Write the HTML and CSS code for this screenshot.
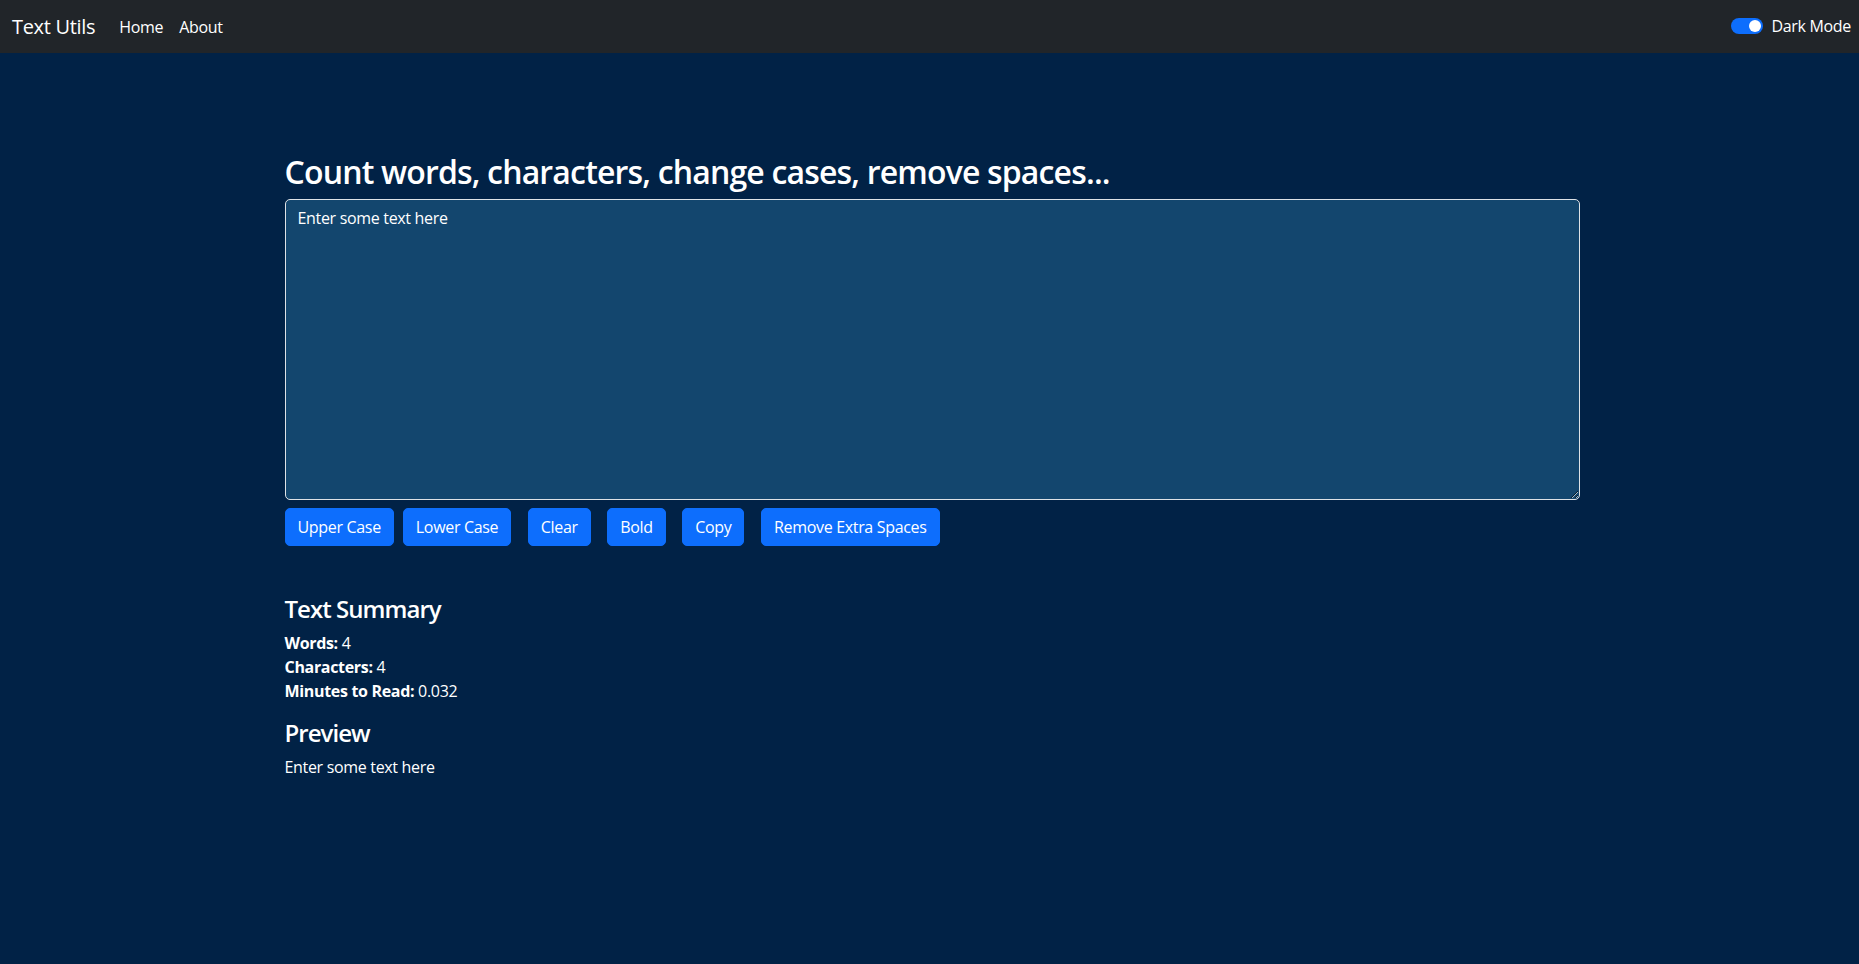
FILE: index.html
```html
<!DOCTYPE html>
<html lang="en">
<head>
    <meta charset="UTF-8">
    <meta name="viewport" content="width=device-width, initial-scale=1">
    <title>Text Utils</title>
    <link rel="stylesheet" href="styles.css">
</head>
<body>
    <nav class="navbar">
        <div class="navbar-left">
            <a class="brand" href="#">Text Utils</a>
            <ul class="nav-links">
                <li><a href="#">Home</a></li>
                <li><a href="#">About</a></li>
            </ul>
        </div>
        <label class="mode-switch">
            <span class="switch"><span class="knob"></span></span>
            <span class="mode-label">Dark Mode</span>
        </label>
    </nav>

    <div class="container">
        <h2 class="page-heading">Count words, characters, change cases, remove spaces...</h2>
        <textarea class="text-box" id="myBox" rows="12">Enter some text here</textarea>

        <div class="actions">
            <button class="btn first">Upper Case</button>
            <button class="btn">Lower Case</button>
            <button class="btn">Clear</button>
            <button class="btn">Bold</button>
            <button class="btn">Copy</button>
            <button class="btn">Remove Extra Spaces</button>
        </div>

        <div class="summary">
            <h4>Text Summary</h4>
            <p>
                <b>Words:</b> 4<br>
                <b>Characters:</b> 4<br>
                <b>Minutes to Read:</b> 0.032
            </p>
            <h4>Preview</h4>
            <p>Enter some text here</p>
        </div>
    </div>
</body>
</html>
```

FILE: styles.css
```css
body {
    margin: 0;
    padding: 0;
    font-family: "Open Sans", "Noto Sans", sans-serif;
    font-size: 16px;
    line-height: 1.5;
    letter-spacing: -0.02em;
    background-color: #012246;
    color: #fff;
}
.navbar {
    height: 53px;
    background-color: #212529;
    display: flex;
    align-items: center;
    justify-content: space-between;
    padding: 0 8px 0 12px;
}
.navbar-left {
    display: flex;
    align-items: center;
}
.brand {
    font-size: 20px;
    line-height: 30px;
    color: #fff;
    text-decoration: none;
    margin-right: 16px;
}
.nav-links {
    display: flex;
    list-style: none;
    margin: 0;
    padding: 0;
}
.nav-links a {
    display: block;
    padding: 0 8px;
    color: #fff;
    text-decoration: none;
}
.mode-switch {
    display: flex;
    align-items: center;
    gap: 8px;
    margin-top: -2px;
}
.switch {
    width: 32px;
    height: 16px;
    border-radius: 8px;
    background-color: #0d6efd;
    display: flex;
    align-items: center;
    justify-content: flex-end;
    padding: 0 2px;
    box-sizing: border-box;
}
.knob {
    width: 12px;
    height: 12px;
    border-radius: 50%;
    background-color: #fff;
}
.container {
    max-width: 1320px;
    margin: 0 auto;
    padding: 99px 10px 0 15px;
    box-sizing: border-box;
}
.page-heading {
    font-size: 32px;
    font-weight: 600;
    line-height: 1.2;
    letter-spacing: -0.026em;
    padding-top: 1px;
    margin: 0 0 8px;
}
.text-box {
    display: block;
    width: 100%;
    height: 301px;
    box-sizing: border-box;
    margin: 0 0 8px;
    padding: 6px 12px;
    font-family: inherit;
    font-size: 16px;
    line-height: 1.5;
    letter-spacing: inherit;
    color: #fff;
    background-color: #13466e;
    border: 1px solid #dee2e6;
    border-radius: 5px;
    outline: none;
}
.actions {
    display: flex;
}
.btn {
    font-family: inherit;
    font-size: 16px;
    line-height: 24px;
    letter-spacing: inherit;
    padding: 6px 12px;
    margin-left: 16.5px;
    border: 1px solid #0d6efd;
    border-radius: 5px;
    background-color: #0d6efd;
    color: #fff;
    cursor: pointer;
}
.btn.first {
    margin-left: 0;
    margin-right: -7.5px;
}
.summary {
    margin-top: 49px;
}
.summary h4 {
    font-size: 24px;
    font-weight: 600;
    line-height: 1.2;
    letter-spacing: -0.04em;
    margin: 0 0 7px;
}
.summary p {
    margin: 0 0 16px;
}
```
